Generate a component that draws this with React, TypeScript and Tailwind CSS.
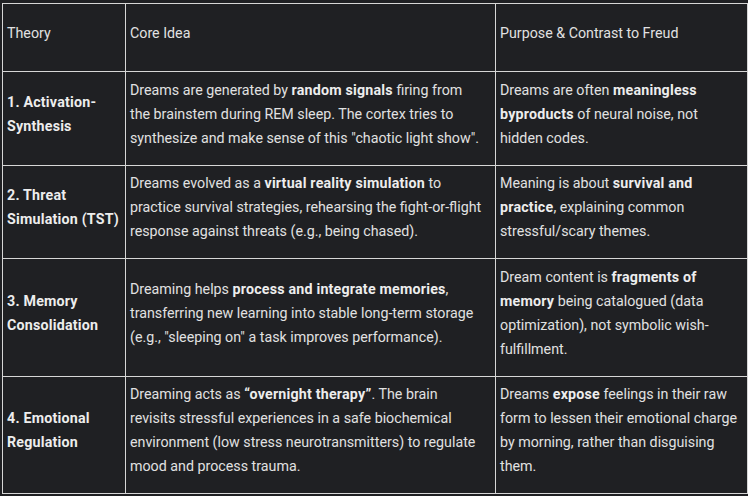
import React from "react";

const B = ({ children }: { children: React.ReactNode }) => (
  <b className="font-bold tracking-[0.2px] text-[#ededed]">{children}</b>
);

const rows: { h: string; c1: React.ReactNode; c2: React.ReactNode; c3: React.ReactNode }[] = [
  {
    h: "h-[94px]",
    c1: (
      <B>
        1. Activation-
        <br />
        Synthesis
      </B>
    ),
    c2: (
      <>
        Dreams are generated by <B>random signals</B> firing from
        <br />
        the brainstem during REM sleep. The cortex tries to
        <br />
        synthesize and make sense of this "chaotic light show".
      </>
    ),
    c3: (
      <>
        Dreams are often <B>meaningless</B>
        <br />
        <B>byproducts</B> of neural noise, not
        <br />
        hidden codes.
      </>
    ),
  },
  {
    h: "h-[93px]",
    c1: (
      <B>
        2. Threat
        <br />
        Simulation (TST)
      </B>
    ),
    c2: (
      <>
        Dreams evolved as a <B>virtual reality simulation</B> to
        <br />
        practice survival strategies, rehearsing the fight-or-flight
        <br />
        response against threats (e.g., being chased).
      </>
    ),
    c3: (
      <>
        Meaning is about <B>survival and</B>
        <br />
        <B>practice</B>, explaining common
        <br />
        stressful/scary themes.
      </>
    ),
  },
  {
    h: "h-[118px]",
    c1: (
      <B>
        3. Memory
        <br />
        Consolidation
      </B>
    ),
    c2: (
      <>
        Dreaming helps <B>process and integrate memories</B>,
        <br />
        transferring new learning into stable long-term storage
        <br />
        (e.g., "sleeping on" a task improves performance).
      </>
    ),
    c3: (
      <>
        Dream content is <B>fragments of</B>
        <br />
        <B>memory</B> being catalogued (data
        <br />
        optimization), not symbolic wish-
        <br />
        fulfillment.
      </>
    ),
  },
  {
    h: "h-[115px]",
    c1: (
      <B>
        4. Emotional
        <br />
        Regulation
      </B>
    ),
    c2: (
      <>
        Dreaming acts as <B>“overnight therapy”</B>. The brain
        <br />
        revisits stressful experiences in a safe biochemical
        <br />
        environment (low stress neurotransmitters) to regulate
        <br />
        mood and process trauma.
      </>
    ),
    c3: (
      <>
        Dreams <B>expose</B> feelings in their raw
        <br />
        form to lessen their emotional charge
        <br />
        by morning, rather than disguising
        <br />
        them.
      </>
    ),
  },
];

const cell =
  "border border-[#d6d6d6] align-middle pl-[4px] pr-[1px] pt-[5px] pb-[15px] whitespace-nowrap overflow-hidden";

export default function App() {
  return (
    <div
      className="w-[748px] h-[496px] bg-[#1f2023] pt-[3px] pl-[2px] text-[14.25px] leading-[24px] text-[#e1e1e1]"
      style={{ fontFamily: "Roboto, 'Liberation Sans', sans-serif" }}
    >
      <table className="table-fixed border-collapse w-[745px]">
        <colgroup>
          <col className="w-[123px]" />
          <col className="w-[370px]" />
          <col className="w-[252px]" />
        </colgroup>
        <thead>
          <tr className="h-[68px]">
            <th className={cell + " font-normal text-left"}>Theory</th>
            <th className={cell + " font-normal text-left"}>Core Idea</th>
            <th className={cell + " font-normal text-left"}>Purpose &amp; Contrast to Freud</th>
          </tr>
        </thead>
        <tbody>
          {rows.map((r, i) => (
            <tr key={i} className={r.h}>
              <td className={cell}>{r.c1}</td>
              <td className={cell}>{r.c2}</td>
              <td className={cell}>{r.c3}</td>
            </tr>
          ))}
        </tbody>
      </table>
    </div>
  );
}
